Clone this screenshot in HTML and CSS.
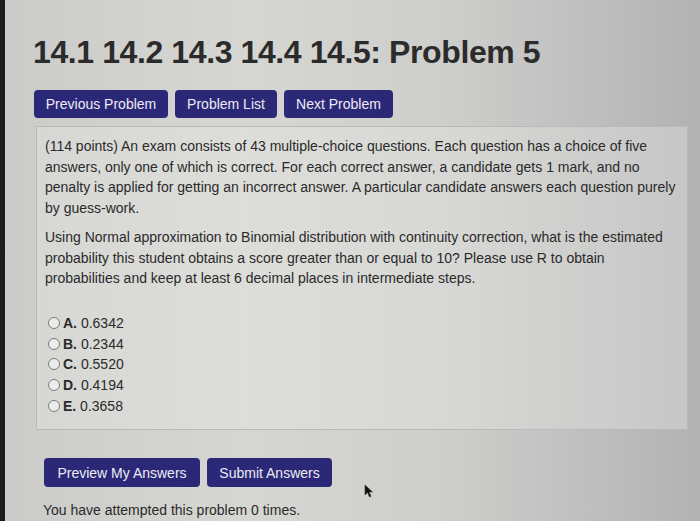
FILE: index.html
```html
<!DOCTYPE html>
<html>
<head>
<meta charset="utf-8">
<link rel="stylesheet" href="styles.css">
</head>
<body>
<div class="page">
  <h1 class="title">14.1 14.2 14.3 14.4 14.5: Problem 5</h1>
  <div class="nav">
    <span class="btn btn-prev">Previous Problem</span>
    <span class="btn btn-list">Problem List</span>
    <span class="btn btn-next">Next Problem</span>
  </div>
  <div class="problem">
    <p class="para">(114 points) An exam consists of 43 multiple-choice questions. Each question has a choice of five answers, only one of which is correct. For each correct answer, a candidate gets 1 mark, and no penalty is applied for getting an incorrect answer. A particular candidate answers each question purely by guess-work.</p>
    <p class="para">Using Normal approximation to Binomial distribution with continuity correction, what is the estimated probability this student obtains a score greater than or equal to 10? Please use R to obtain probabilities and keep at least 6 decimal places in intermediate steps.</p>
    <ul class="options">
      <li class="opt"><span class="radio"></span><b>A.</b>&nbsp;0.6342</li>
      <li class="opt"><span class="radio"></span><b>B.</b>&nbsp;0.2344</li>
      <li class="opt"><span class="radio"></span><b>C.</b>&nbsp;0.5520</li>
      <li class="opt"><span class="radio"></span><b>D.</b>&nbsp;0.4194</li>
      <li class="opt"><span class="radio"></span><b>E.</b>&nbsp;0.3658</li>
    </ul>
  </div>
  <div class="actions">
    <span class="btn btn-preview">Preview My Answers</span>
    <span class="btn btn-submit">Submit Answers</span>
  </div>
  <p class="attempts">You have attempted this problem 0 times.</p>
</div>
<svg class="cursor" width="9" height="14" viewBox="0 0 9 14"><path d="M1 1 L1 11 L3.5 8.5 L5.5 13 L7 12.3 L5 8 L8.5 8 Z" fill="#111" stroke="#333" stroke-width="0.6"/></svg>
</body>
</html>
```
FILE: styles.css
```css
html, body {
  margin: 0;
  padding: 0;
  width: 700px;
  height: 521px;
  overflow: hidden;
}
body {
  position: relative;
  font-family: "Liberation Sans", Arial, sans-serif;
  color: #2a2a2a;
  background: linear-gradient(90deg, #cbccc9 0%, #d6d7d3 35%, #cdcecb 65%, #b2b2b4 100%);
  border-left: 5px solid #1c1c1c;
  box-sizing: border-box;
}
.page {
  padding: 0 0 0 28px;
}
.title {
  margin: 0;
  padding-top: 36px;
  font-size: 32px;
  line-height: 32px;
  font-weight: bold;
  letter-spacing: -0.4px;
  color: #2b2b2b;
}
.nav {
  display: flex;
  gap: 7px;
  margin-top: 22px;
  padding-left: 1px;
}
.btn {
  display: inline-flex;
  align-items: center;
  justify-content: center;
  height: 28px;
  background: #2c2878;
  color: #ececf4;
  font-size: 14px;
  border-radius: 4px;
  box-sizing: border-box;
}
.btn-prev { width: 134px; }
.btn-list { width: 102px; }
.btn-next { width: 109px; }
.problem {
  margin-top: 8px;
  margin-left: 3px;
  width: 652px;
  height: 304px;
  box-sizing: border-box;
  border: 1px solid #b9b9b8;
  background: rgba(236, 236, 232, 0.35);
  padding: 9px 10px 0 8px;
}
.para {
  margin: 0 0 9px 0;
  font-size: 14px;
  line-height: 20.5px;
}
.options {
  list-style: none;
  margin: 24px 0 0 0;
  padding: 0 0 0 3px;
}
.opt {
  display: flex;
  align-items: center;
  height: 20.8px;
  font-size: 14px;
}
.opt b { font-weight: bold; }
.radio {
  width: 10px;
  height: 10px;
  border: 1px solid #7a7a7a;
  border-radius: 50%;
  background: #ececea;
  margin-right: 3px;
}
.actions {
  display: flex;
  gap: 7px;
  margin-top: 28px;
  padding-left: 11px;
}
.btn-preview { width: 156px; height: 29px; }
.btn-submit { width: 125px; height: 29px; }
.attempts {
  margin: 15px 0 0 10px;
  font-size: 14px;
}
.cursor {
  position: absolute;
  left: 359px;
  top: 484px;
}
```
